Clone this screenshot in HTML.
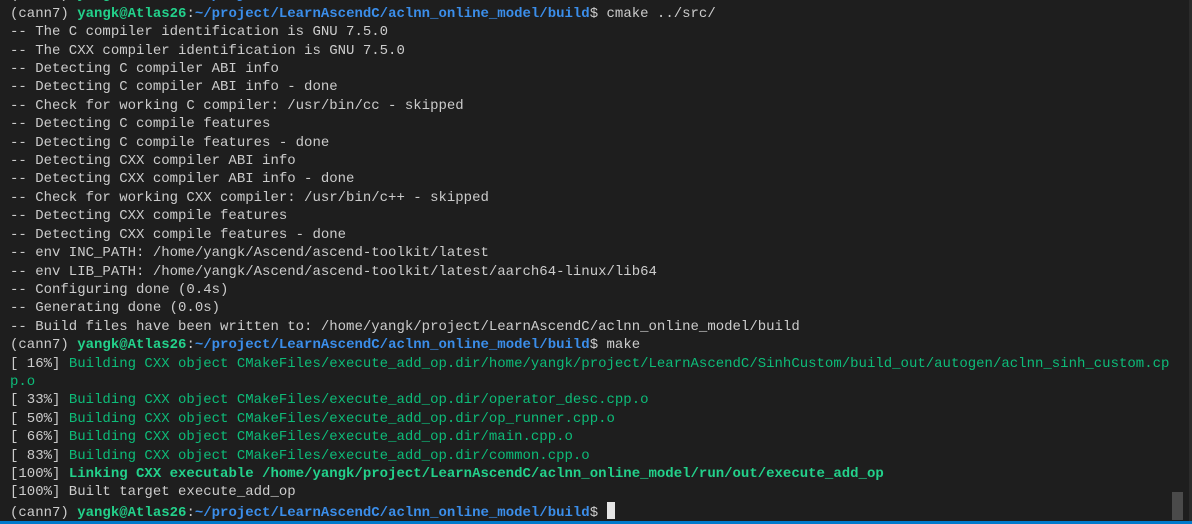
<!DOCTYPE html>
<html><head><meta charset="utf-8"><style>
html,body{margin:0;padding:0;width:1192px;height:524px;overflow:hidden;background:#1e1e1e;}
#t{position:absolute;left:10px;top:-13.6px;font-family:"Liberation Mono",monospace;font-size:14px;line-height:18.4px;color:#cccccc;white-space:pre;}
.g{color:#23d18b;font-weight:bold}
.b{color:#3b8eea;font-weight:bold}
.n{color:#0dbc79}
.cur{display:inline-block;width:8px;height:17px;background:#e5e5e5;vertical-align:-3px}
#sb{position:absolute;left:1172px;top:492px;width:11px;height:28px;background:#4a4a4a}
#edge{position:absolute;left:1189px;top:0;width:3px;height:524px;background:#2b2b2b}
#bl{position:absolute;left:0;top:521px;width:1192px;height:3px;background:#007acc}
</style></head><body>
<div id="t">(cann7) <span class="g">yangk@Atlas26</span>:<span class="b">~/project/LearnAscendC/aclnn_online_model/build</span>$ rm -rf ./*
(cann7) <span class="g">yangk@Atlas26</span>:<span class="b">~/project/LearnAscendC/aclnn_online_model/build</span>$ cmake ../src/
-- The C compiler identification is GNU 7.5.0
-- The CXX compiler identification is GNU 7.5.0
-- Detecting C compiler ABI info
-- Detecting C compiler ABI info - done
-- Check for working C compiler: /usr/bin/cc - skipped
-- Detecting C compile features
-- Detecting C compile features - done
-- Detecting CXX compiler ABI info
-- Detecting CXX compiler ABI info - done
-- Check for working CXX compiler: /usr/bin/c++ - skipped
-- Detecting CXX compile features
-- Detecting CXX compile features - done
-- env INC_PATH: /home/yangk/Ascend/ascend-toolkit/latest
-- env LIB_PATH: /home/yangk/Ascend/ascend-toolkit/latest/aarch64-linux/lib64
-- Configuring done (0.4s)
-- Generating done (0.0s)
-- Build files have been written to: /home/yangk/project/LearnAscendC/aclnn_online_model/build
(cann7) <span class="g">yangk@Atlas26</span>:<span class="b">~/project/LearnAscendC/aclnn_online_model/build</span>$ make
[ 16%] <span class="n">Building CXX object CMakeFiles/execute_add_op.dir/home/yangk/project/LearnAscendC/SinhCustom/build_out/autogen/aclnn_sinh_custom.cp</span>
<span class="n">p.o</span>
[ 33%] <span class="n">Building CXX object CMakeFiles/execute_add_op.dir/operator_desc.cpp.o</span>
[ 50%] <span class="n">Building CXX object CMakeFiles/execute_add_op.dir/op_runner.cpp.o</span>
[ 66%] <span class="n">Building CXX object CMakeFiles/execute_add_op.dir/main.cpp.o</span>
[ 83%] <span class="n">Building CXX object CMakeFiles/execute_add_op.dir/common.cpp.o</span>
[100%] <span class="g">Linking CXX executable /home/yangk/project/LearnAscendC/aclnn_online_model/run/out/execute_add_op</span>
[100%] Built target execute_add_op
(cann7) <span class="g">yangk@Atlas26</span>:<span class="b">~/project/LearnAscendC/aclnn_online_model/build</span>$ <span class="cur"></span></div>
<div id="sb"></div><div id="edge"></div><div id="bl"></div>
</body></html>
